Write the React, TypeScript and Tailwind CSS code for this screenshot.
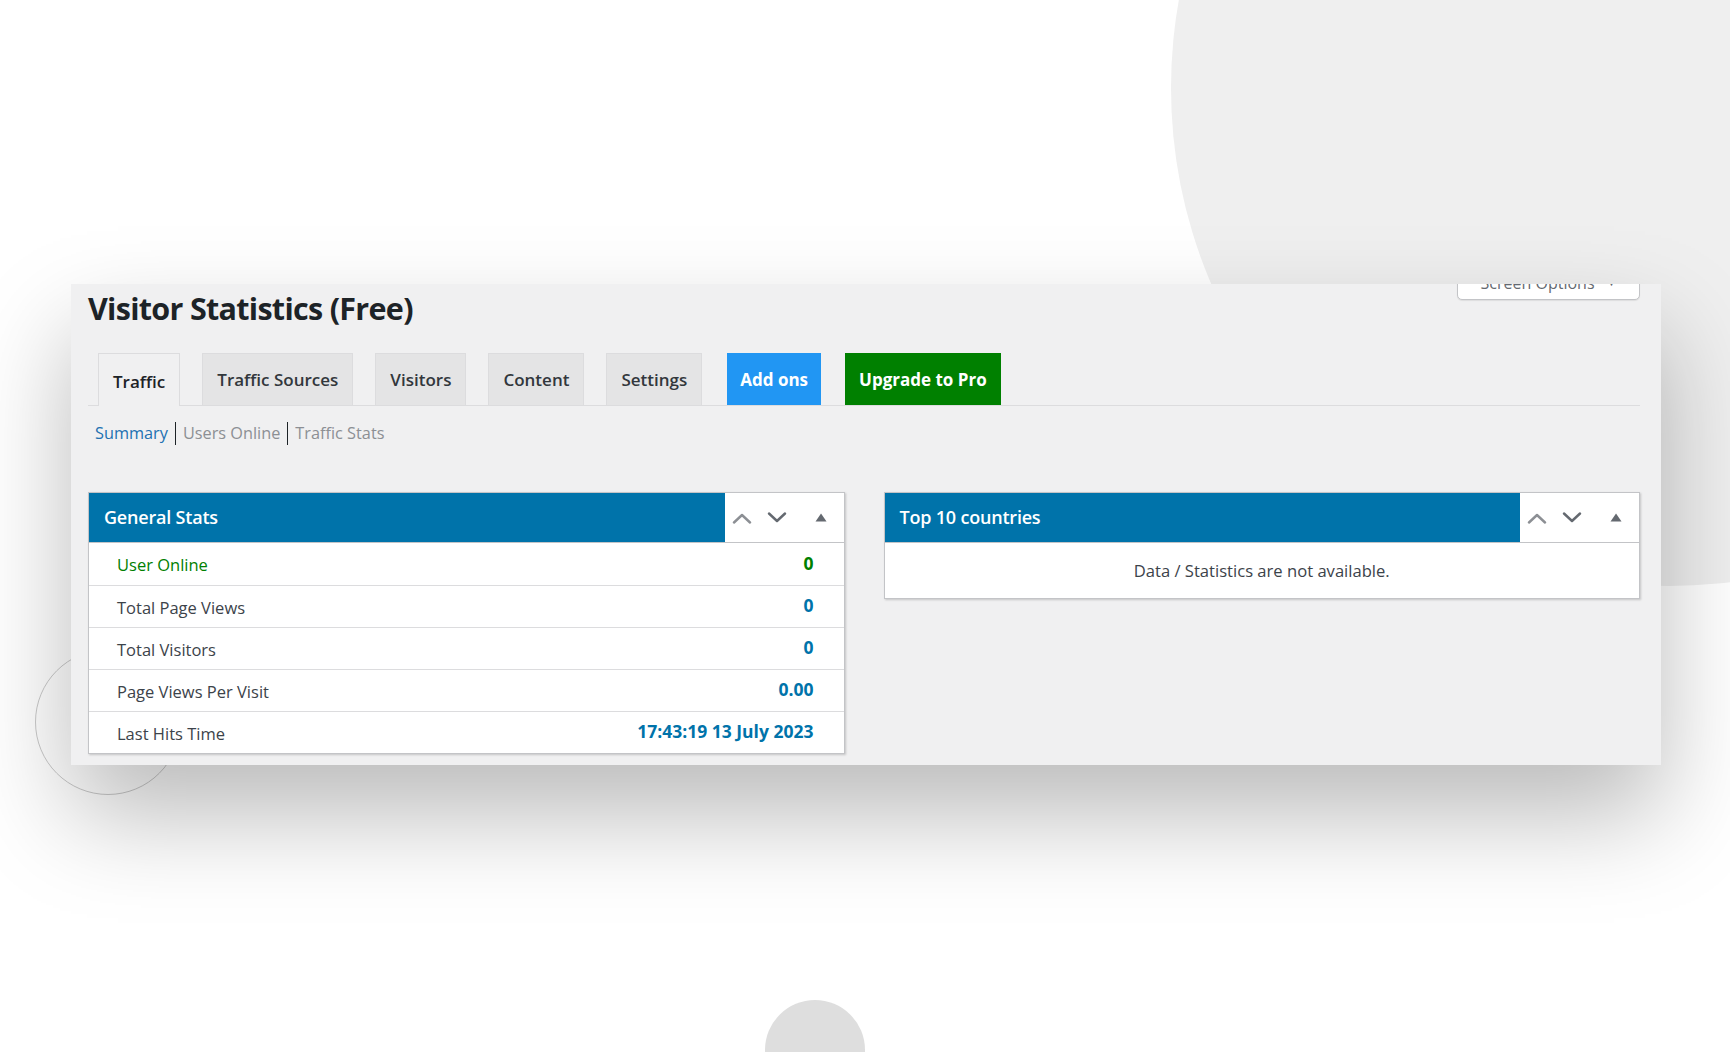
import React from "react";

const ChevronUp = ({ color }: { color: string }) => (
  <svg width="20" height="12" viewBox="0 0 20 12" fill="none">
    <path d="M2 10.5 L10 3 L18 10.5" stroke={color} strokeWidth="2.4" strokeLinecap="round" strokeLinejoin="round" />
  </svg>
);

const ChevronDown = ({ color }: { color: string }) => (
  <svg width="20" height="12" viewBox="0 0 20 12" fill="none">
    <path d="M2 1.5 L10 9 L18 1.5" stroke={color} strokeWidth="2.4" strokeLinecap="round" strokeLinejoin="round" />
  </svg>
);

const TriUp = () => (
  <svg width="12" height="9" viewBox="0 0 12 9">
    <path d="M6 0.5 L11.5 8.5 L0.5 8.5 Z" fill="#646970" />
  </svg>
);

const Controls = () => (
  <div className="w-[119px] bg-white flex items-center pl-[7px]">
    <ChevronUp color="#8c8f94" />
    <div className="ml-[15px]">
      <ChevronDown color="#646970" />
    </div>
    <div className="ml-[28px] -mt-[1px]">
      <TriUp />
    </div>
  </div>
);

const WidgetHeader = ({ title }: { title: string }) => (
  <div className="flex h-[50px] border-b border-[#c3c4c7]">
    <div className="flex-1 bg-[#0073aa] flex items-center pl-[15px]">
      <span className="text-white text-[18px] font-semibold tracking-[-0.2px]">{title}</span>
    </div>
    <Controls />
  </div>
);

const rows: { label: string; value: string; green?: boolean }[] = [
  { label: "User Online", value: "0", green: true },
  { label: "Total Page Views", value: "0" },
  { label: "Total Visitors", value: "0" },
  { label: "Page Views Per Visit", value: "0.00" },
  { label: "Last Hits Time", value: "17:43:19 13 July 2023" },
];

const tabs = ["Traffic Sources", "Visitors", "Content", "Settings"];

export default function App() {
  return (
    <div className="relative w-[1730px] h-[1052px] overflow-hidden bg-white font-['Open_Sans','Noto_Sans',sans-serif]">
      {/* decorative circles */}
      <div className="absolute left-[1171px] top-[-410px] w-[996px] h-[996px] rounded-full bg-[#efefef]" />
      <div className="absolute left-[35px] top-[649px] w-[146px] h-[146px] rounded-full border-[1.5px] border-[#cacaca]" />
      <div className="absolute left-[765px] top-[1000px] w-[100px] h-[100px] rounded-full bg-[#dedede]" />

      {/* panel */}
      <div className="relative z-10 ml-[71px] mt-[284px] w-[1590px] h-[481px] bg-[#f0f0f1] overflow-hidden pl-[17px] pr-[21px] pt-[4px] shadow-[0_50px_95px_rgba(0,0,0,0.27)]">
        <div className="flex items-start justify-between">
          <h1 className="text-[#1d2327] text-[30.5px] leading-[40px] font-bold tracking-[-0.7px]">
            Visitor Statistics (Free)
          </h1>
          <div className="-mt-[30px] h-[42px] w-[183px] bg-white border border-[#c3c4c7] rounded-b-[5px] flex items-center justify-center gap-[12px] pt-[7px] text-[#646970] text-[16px] shadow-[0_1px_1px_rgba(0,0,0,0.08)]">
            <span>Screen Options</span>
            <span className="text-[10px]">▼</span>
          </div>
        </div>

        {/* tabs */}
        <div className="mt-[25px] flex gap-[22px] pl-[10px] border-b border-[#dcdcde] h-[53px]">
          <div className="h-[53px] -mb-px px-[14px] flex items-center pt-[4px] bg-[#f0f0f1] border border-b-0 border-[#dcdcde] text-[17px] font-semibold text-[#1d2327]">
            Traffic
          </div>
          {tabs.map((t) => (
            <div
              key={t}
              className="h-[52px] px-[14px] flex items-center pt-[1px] bg-[#e4e4e5] border border-b-0 border-[#dcdcde] text-[17px] font-semibold text-[#32373c]"
            >
              {t}
            </div>
          ))}
          <div className="h-[52px] ml-[3px] px-[13px] flex items-center pt-[1px] bg-[#2196f3] text-[17px] font-bold text-white">
            Add ons
          </div>
          <div className="h-[52px] ml-[2px] px-[14px] flex items-center pt-[1px] bg-[#008000] text-[17px] font-bold text-white">
            Upgrade to Pro
          </div>
        </div>

        {/* subnav */}
        <div className="mt-[15px] flex items-center pl-[7px] text-[16.3px] leading-[24px]">
          <span className="text-[#2271b1]">Summary</span>
          <span className="mx-[7px] h-[23px] border-l border-[#1d2327]" />
          <span className="text-[#8c8f94]">Users Online</span>
          <span className="mx-[7px] h-[23px] border-l border-[#1d2327]" />
          <span className="text-[#8c8f94]">Traffic Stats</span>
        </div>

        {/* widgets */}
        <div className="mt-[47px] grid grid-cols-2 gap-[39px] items-start">
          <div className="border border-[#c3c4c7] shadow-[1px_1px_2px_rgba(0,0,0,0.18)] bg-white">
            <WidgetHeader title="General Stats" />
            {rows.map((r, i) => (
              <div
                key={r.label}
                className={`h-[42px] flex items-center justify-between pl-[28px] pr-[30px] ${i > 0 ? "border-t border-[#dcdcde]" : ""}`}
              >
                <span className={`pt-[3px] text-[16.5px] ${r.green ? "text-[#008000]" : "text-[#3c434a]"}`}>{r.label}</span>
                <span className={`pb-[2px] text-[17.5px] font-bold ${r.green ? "text-[#008000]" : "text-[#0073aa]"}`}>{r.value}</span>
              </div>
            ))}
          </div>
          <div className="border border-[#c3c4c7] shadow-[1px_1px_2px_rgba(0,0,0,0.18)] bg-white">
            <WidgetHeader title="Top 10 countries" />
            <div className="h-[55px] flex items-center justify-center pt-[2px] text-[16.6px] text-[#3c434a]">
              Data / Statistics are not available.
            </div>
          </div>
        </div>
      </div>
    </div>
  );
}
